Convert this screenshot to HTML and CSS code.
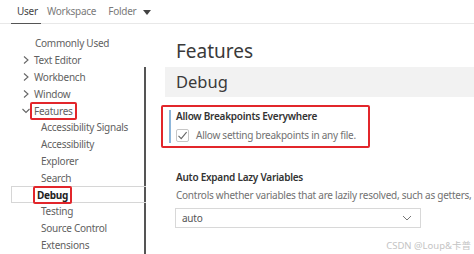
FILE: index.html
```html
<!DOCTYPE html>
<html>
<head>
<meta charset="utf-8">
<link rel="stylesheet" href="styles.css">
</head>
<body>
<div class="tabs">
  <div class="tab active">User</div>
  <div class="tab">Workspace</div>
  <div class="tab folder">Folder <svg class="tri" width="8" height="5" viewBox="0 0 8 5"><path d="M0 0H8L4 5Z" fill="#424242"/></svg></div>
</div>
<div class="body">
  <div class="sidebar">
    <div class="row"><span class="lbl">Commonly Used</span></div>
    <div class="row"><svg class="chev" width="8" height="10" viewBox="0 0 8 10"><path d="M2 1.5L6 5L2 8.5" fill="none" stroke="#666" stroke-width="1.1"/></svg><span class="lbl">Text Editor</span></div>
    <div class="row"><svg class="chev" width="8" height="10" viewBox="0 0 8 10"><path d="M2 1.5L6 5L2 8.5" fill="none" stroke="#666" stroke-width="1.1"/></svg><span class="lbl">Workbench</span></div>
    <div class="row"><svg class="chev" width="8" height="10" viewBox="0 0 8 10"><path d="M2 1.5L6 5L2 8.5" fill="none" stroke="#666" stroke-width="1.1"/></svg><span class="lbl">Window</span></div>
    <div class="row"><svg class="chev" width="8" height="10" viewBox="0 0 8 10"><path d="M0.5 3L4 6.5L7.5 3" fill="none" stroke="#666" stroke-width="1.1"/></svg><span class="lbl mark">Features</span></div>
    <div class="row child"><span class="lbl">Accessibility Signals</span></div>
    <div class="row child"><span class="lbl">Accessibility</span></div>
    <div class="row child"><span class="lbl">Explorer</span></div>
    <div class="row child"><span class="lbl">Search</span></div>
    <div class="row child selected"><span class="lbl mark bold">Debug</span></div>
    <div class="row child"><span class="lbl">Testing</span></div>
    <div class="row child"><span class="lbl">Source Control</span></div>
    <div class="row child"><span class="lbl">Extensions</span></div>
  </div>
  <div class="main">
    <div class="h1">Features</div>
    <div class="band">Debug</div>
    <div class="setting boxed">
      <div class="bar"></div>
      <div class="s-inner">
        <div class="s-title">Allow Breakpoints Everywhere</div>
        <div class="check-row">
          <span class="checkbox"><svg width="11" height="11" viewBox="0 0 11 11"><path d="M1.5 5.8L4.2 8.6L9.6 2.2" fill="none" stroke="#666" stroke-width="1.1"/></svg></span>
          <span class="s-desc">Allow setting breakpoints in any file.</span>
        </div>
      </div>
    </div>
    <div class="setting plain">
      <div class="s-title">Auto Expand Lazy Variables</div>
      <div class="s-desc wide">Controls whether variables that are lazily resolved, such as getters, are automatically resolved and expanded by the debugger.</div>
      <div class="select"><span>auto</span><svg width="10" height="6" viewBox="0 0 10 6"><path d="M1 1L5 5L9 1" fill="none" stroke="#777" stroke-width="1"/></svg></div>
    </div>
    <div class="wm">CSDN @Loup&amp;卡普</div>
  </div>
</div>
</body>
</html>
```
FILE: styles.css
```css
html, body { margin: 0; padding: 0; background: #fff; }
body {
  width: 474px; height: 254px; overflow: hidden;
  font-family: "Noto Sans", "Open Sans", "Noto Sans CJK SC", sans-serif;
  font-size: 10px; letter-spacing: -0.25px; color: #616161;
}
.tabs {
  display: flex; align-items: center; height: 23px;
  border-bottom: 1px solid #e8e8e8; padding-left: 11px;
}
.tab {
  height: 23px; line-height: 23px; padding: 0 3px 0 6px; color: #7a7a7a;
  box-sizing: border-box; display: flex; align-items: center; gap: 6px;
}
.tab.active { color: #444; border-bottom: 1px solid #555; height: 24px; margin-bottom: -1px; }
.tab.folder { margin-left: 3px; }
.tri { margin-top: 1px; }
.body { display: grid; grid-template-columns: 146px minmax(0, 1fr); height: 230px; }
.sidebar {
  padding-top: 11px;
  background: linear-gradient(#555, #555) right 43px / 2px 100% no-repeat;
}
.row {
  height: 16.8px; display: flex; align-items: center; padding-left: 22px;
  box-sizing: border-box; white-space: nowrap;
}
.row .chev { margin-right: 4px; flex: none; }
.row .lbl { line-height: 16px; }
.row:first-child { padding-left: 35px; }
.row.child { padding-left: 41px; }
.row.selected { border: 1px solid #d6d6d6; border-right: none; margin-left: 11px; padding-left: 25px; }
.mark { border: 2px solid #e2262b; border-radius: 2px; padding: 0 2px; margin-left: -4px; line-height: 14px !important; }
.bold { font-weight: 700; color: #222; }
.main { position: relative; padding-left: 2px; overflow: hidden; }
.h1 { font-size: 19px; letter-spacing: 0; color: #3a3a3a; padding: 13px 0 0 28px; line-height: 28px; height: 28px; }
.band {
  margin: 2px 0 0 17px; height: 30px; line-height: 30px; background: #f2f2f2;
  font-size: 16.5px; letter-spacing: 0; color: #3a3a3a; padding-left: 11px;
}
.setting.boxed {
  margin: 8px 0 0 13px; width: 209px; height: 43px; box-sizing: border-box;
  border: 2px solid #e2262b; border-radius: 2px; display: flex;
}
.bar { width: 2px; height: 33px; margin: 3px 0 0 6px; background: #8db6da; flex: none; }
.s-inner { padding: 1px 0 0 5px; }
.s-title { font-weight: 600; color: #333; line-height: 16px; white-space: nowrap; }
.check-row { display: flex; align-items: center; margin-top: 3px; gap: 7px; }
.checkbox {
  width: 13px; height: 13px; border: 1px solid #c6c6c6; border-radius: 2px;
  display: flex; align-items: center; justify-content: center; box-sizing: border-box; background: #fff;
}
.s-desc { color: #717171; white-space: nowrap; line-height: 16px; }
.setting.plain { margin: 21px 0 0 28px; }
.wide { margin-top: 2px; }
.select {
  margin-top: 5px; width: 246px; height: 20px; box-sizing: border-box;
  border: 1px solid #d8d8d8; display: flex; align-items: center; justify-content: space-between;
  padding: 0 8px 0 6px; color: #555; margin-left: -1px;
}
.wm {
  position: absolute; right: 3px; bottom: 2px; font-size: 9.5px; letter-spacing: 0; color: #c4c4c4; white-space: nowrap;
}
```
